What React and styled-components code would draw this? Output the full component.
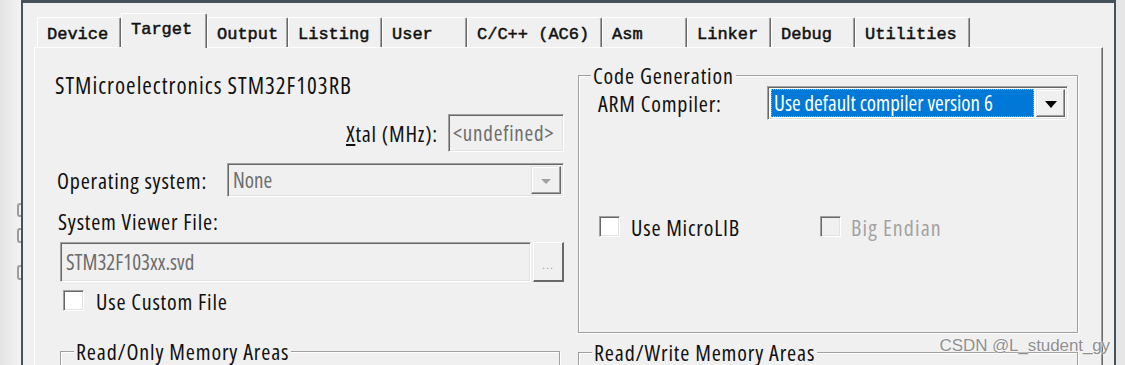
import React from "react";
import styled, { createGlobalStyle } from "styled-components";

const UI_FONT = `"Open Sans", "Liberation Sans", Arial, sans-serif`;

const GlobalStyle = createGlobalStyle`
  html, body {
    margin: 0;
    padding: 0;
    background: #f0f0f0;
    overflow: hidden;
  }
  body {
    font-family: ${UI_FONT};
    font-stretch: 75%;
  }
  * {
    box-sizing: border-box;
  }
`;

const Window = styled.div`
  position: relative;
  display: flex;
  width: 1125px;
  height: 365px;
  overflow: hidden;
  background: #f0f0f0;
`;

const LeftStrip = styled.div`
  width: 21px;
  flex-shrink: 0;
  display: flex;
  flex-direction: column;
  align-items: flex-end;
  padding-top: 203px;
  background: linear-gradient(to right, #e3e3e3, #f3f3f3);
`;

const Bracket = styled.div`
  width: 4px;
  height: ${({ h }) => h}px;
  margin-top: ${({ gap }) => gap}px;
  border: 2px solid #9d9d9d;
  border-right: none;
  border-radius: 3px 0 0 3px;
`;

const RightStrip = styled.div`
  width: 9px;
  flex-shrink: 0;
  background: #e6e6e6;
`;

const Frame = styled.div`
  width: 1095px;
  flex-shrink: 0;
  display: flex;
  flex-direction: column;
  padding: 0 11px;
  background: #f0f0f0;
  border-left: 2px solid #46525a;
  border-right: 2px solid #46525a;
  border-top: 3px solid #46525a;
`;

const TabBar = styled.div`
  height: 44px;
  flex-shrink: 0;
  display: flex;
  align-items: flex-end;
  padding-left: 3px;
`;

const Tab = styled.div`
  position: relative;
  width: ${({ w }) => w}px;
  height: ${({ active }) => (active ? 35 : 30)}px;
  margin-bottom: ${({ active }) => (active ? -1 : 0)}px;
  z-index: ${({ active }) => (active ? 1 : 0)};
  display: flex;
  align-items: center;
  padding-left: 9px;
  padding-top: ${({ active }) => (active ? 0 : 3)}px;
  padding-bottom: ${({ active }) => (active ? 3 : 0)}px;
  background: #f0f0f0;
  border-top: 1px solid #ffffff;
  border-left: 1px solid #ffffff;
  border-right: 1px solid #696969;
  box-shadow: inset -1px 0 0 #a0a0a0;
  border-radius: 2px 2px 0 0;
  font-family: "Liberation Mono", "Courier New", monospace;
  font-stretch: normal;
  font-size: 17px;
  color: #111;
  -webkit-text-stroke: 0.5px #111;
  white-space: pre;
`;

const Panel = styled.div`
  flex: 1;
  min-height: 0;
  overflow: hidden;
  display: grid;
  grid-template-columns: 509px 500px;
  column-gap: 14px;
  align-items: start;
  padding: 16px 0 0 20px;
  border-top: 1px solid #ffffff;
  border-left: 1px solid #ffffff;
  border-right: 1px solid #696969;
  box-shadow: inset -1px 0 0 #a0a0a0;
`;

const Column = styled.div`
  display: flex;
  flex-direction: column;
`;

const Text = styled.span`
  font-size: 22px;
  letter-spacing: ${({ ls }) => (ls === undefined ? 0.8 : ls)}px;
  line-height: 24px;
  color: ${({ muted }) => (muted ? "#a3a3a3" : "#111")};
  white-space: nowrap;
`;

const DeviceName = styled(Text)`
  display: block;
  margin-top: 9px;
  font-size: 23px;
  letter-spacing: 1px;
`;

const Row = styled.div`
  display: flex;
  align-items: center;
  height: ${({ h }) => h}px;
  margin-top: ${({ mt }) => mt}px;
  padding-left: ${({ pl }) => pl || 0}px;
  padding-right: ${({ pr }) => pr || 0}px;
  gap: ${({ gap }) => gap || 0}px;
  justify-content: ${({ end }) => (end ? "flex-end" : "flex-start")};
`;

const Sunken = styled.div`
  display: flex;
  align-items: center;
  width: ${({ w }) => (w ? `${w}px` : "auto")};
  flex: ${({ w }) => (w ? "none" : 1)};
  height: 100%;
  margin-left: ${({ ml }) => (ml ? "auto" : 0)};
  background: ${({ white }) => (white ? "#ffffff" : "#f0f0f0")};
  border-top: 1px solid #a0a0a0;
  border-left: 1px solid #a0a0a0;
  border-bottom: 1px solid #ffffff;
  border-right: 1px solid #ffffff;
  box-shadow: inset 1px 1px 0 #696969, inset -1px -1px 0 #e3e3e3;
  padding: 2px 2px 2px ${({ pad }) => pad || 5}px;
`;

const FieldText = styled.span`
  flex: 1;
  font-size: 21px;
  letter-spacing: ${({ ls }) => ls || 0}px;
  line-height: 24px;
  color: #6d6d6d;
  white-space: nowrap;
`;

const DropButton = styled.div`
  width: ${({ w }) => w}px;
  height: 100%;
  flex-shrink: 0;
  display: flex;
  align-items: center;
  justify-content: center;
  background: #f0f0f0;
  border-top: 1px solid #e3e3e3;
  border-left: 1px solid #e3e3e3;
  border-right: 1px solid #696969;
  border-bottom: 1px solid #696969;
  box-shadow: inset -1px -1px 0 #a0a0a0, inset 1px 1px 0 #ffffff;
`;

const Arrow = styled.span`
  width: 0;
  height: 0;
  border-left: ${({ big }) => (big ? 6 : 5)}px solid transparent;
  border-right: ${({ big }) => (big ? 6 : 5)}px solid transparent;
  border-top: ${({ big }) => (big ? 7 : 5)}px solid
    ${({ big }) => (big ? "#000" : "#a0a0a0")};
  margin-top: 2px;
`;

const Highlight = styled.div`
  flex: 1;
  height: 100%;
  margin-right: 2px;
  display: flex;
  align-items: center;
  padding-left: 3px;
  background: #0078d7;
  outline: 1px dotted #e8a040;
  outline-offset: -1px;
  font-size: 21px;
  line-height: 24px;
  color: #ffffff;
  white-space: nowrap;
`;

const BrowseButton = styled.div`
  width: 31px;
  height: 100%;
  flex-shrink: 0;
  display: flex;
  align-items: flex-end;
  justify-content: center;
  padding-bottom: 9px;
  background: #f0f0f0;
  border-top: 1px solid #ffffff;
  border-left: 1px solid #ffffff;
  border-right: 2px solid #696969;
  border-bottom: 2px solid #696969;
  font-family: "Liberation Sans", Arial, sans-serif;
  font-size: 11px;
  line-height: 11px;
  letter-spacing: 1px;
  color: #9a9a9a;
`;

const Box = styled.span`
  width: 21px;
  height: 21px;
  flex-shrink: 0;
  background: ${({ disabled }) => (disabled ? "#f0f0f0" : "#ffffff")};
  border-top: 1px solid #a0a0a0;
  border-left: 1px solid #a0a0a0;
  border-bottom: 1px solid #ffffff;
  border-right: 1px solid #ffffff;
  box-shadow: inset 1px 1px 0 #696969, inset -1px -1px 0 #e3e3e3;
`;

const CheckItem = styled.div`
  display: flex;
  align-items: center;
  gap: ${({ gap }) => gap}px;
  width: ${({ w }) => (w ? `${w}px` : "auto")};
`;

const Group = styled.fieldset`
  margin: ${({ mt }) => mt}px 0 0 ${({ ml }) => ml || 0}px;
  padding: 0;
  width: ${({ w }) => w}px;
  height: ${({ h }) => h}px;
  min-width: 0;
  border: 1px solid #a0a0a0;
  box-shadow: inset 1px 1px 0 #ffffff, 1px 1px 0 #ffffff;
  display: flex;
  flex-direction: column;
`;

const Legend = styled.legend`
  margin-left: ${({ ml }) => ml}px;
  padding: 0 2px;
  font-size: 22px;
  letter-spacing: 0.85px;
  line-height: 20px;
  color: #111;
  background: #f0f0f0;
  white-space: nowrap;
`;

const Watermark = styled.div`
  position: absolute;
  right: 15px;
  bottom: 10px;
  font-family: "Liberation Sans", Arial, sans-serif;
  font-stretch: normal;
  font-size: 17px;
  line-height: 18px;
  color: #8e8e8e;
  text-shadow: 0 0 2px #ffffff, 0 0 1px #ffffff;
  letter-spacing: -0.1px;
`;

const tabs = [
  { label: "Device", w: 84 },
  { label: "Target", w: 86, active: true },
  { label: "Output", w: 81 },
  { label: "Listing", w: 94 },
  { label: "User", w: 85 },
  { label: "C/C++ (AC6)", w: 135 },
  { label: "Asm", w: 85 },
  { label: "Linker", w: 84 },
  { label: "Debug", w: 84 },
  { label: "Utilities", w: 115 },
];

export default function App() {
  return (
    <>
      <GlobalStyle />
      <Window>
        <LeftStrip>
          <Bracket h={14} gap={0} />
          <Bracket h={15} gap={11} />
          <Bracket h={15} gap={22} />
        </LeftStrip>

        <Frame>
          <TabBar>
            {tabs.map((t) => (
              <Tab key={t.label} w={t.w} active={t.active}>
                {t.label}
              </Tab>
            ))}
          </TabBar>

          <Panel>
            <Column>
              <DeviceName>STMicroelectronics STM32F103RB</DeviceName>

              <Row h={38} mt={17} end gap={10}>
                <Text>
                  <u>X</u>tal (MHz):
                </Text>
                <Sunken w={116} pad={4}>
                  <FieldText ls={0.8}>&lt;undefined&gt;</FieldText>
                </Sunken>
              </Row>

              <Row h={34} mt={11} pl={2}>
                <Text>Operating system:</Text>
                <Sunken w={337} ml>
                  <FieldText>None</FieldText>
                  <DropButton w={30}>
                    <Arrow />
                  </DropButton>
                </Sunken>
              </Row>

              <Row h={24} mt={12} pl={3}>
                <Text>System Viewer File:</Text>
              </Row>

              <Row h={40} mt={9} pl={5} gap={2}>
                <Sunken>
                  <FieldText>STM32F103xx.svd</FieldText>
                </Sunken>
                <BrowseButton>...</BrowseButton>
              </Row>

              <Row h={21} mt={8} pl={8}>
                <CheckItem gap={12}>
                  <Box />
                  <Text>Use Custom File</Text>
                </CheckItem>
              </Row>

              <Group mt={30} ml={5} w={500} h={80}>
                <Legend ml={13}>Read/Only Memory Areas</Legend>
              </Group>
            </Column>

            <Column>
              <Group mt={1} w={500} h={268}>
                <Legend ml={12}>Code Generation</Legend>
                <Row h={34} mt={1} pl={19} pr={9}>
                  <Text>ARM Compiler:</Text>
                  <Sunken w={301} ml white pad={3}>
                    <Highlight>Use default compiler version 6</Highlight>
                    <DropButton w={29}>
                      <Arrow big />
                    </DropButton>
                  </Sunken>
                </Row>
                <Row h={21} mt={96} pl={20}>
                  <CheckItem gap={11} w={221}>
                    <Box />
                    <Text>Use MicroLIB</Text>
                  </CheckItem>
                  <CheckItem gap={10}>
                    <Box disabled />
                    <Text muted ls={1.1}>
                      Big Endian
                    </Text>
                  </CheckItem>
                </Row>
              </Group>

              <Group mt={9} w={500} h={80}>
                <Legend ml={13}>Read/Write Memory Areas</Legend>
              </Group>
            </Column>
          </Panel>
        </Frame>

        <RightStrip />
        <Watermark>CSDN @L_student_gy</Watermark>
      </Window>
    </>
  );
}
